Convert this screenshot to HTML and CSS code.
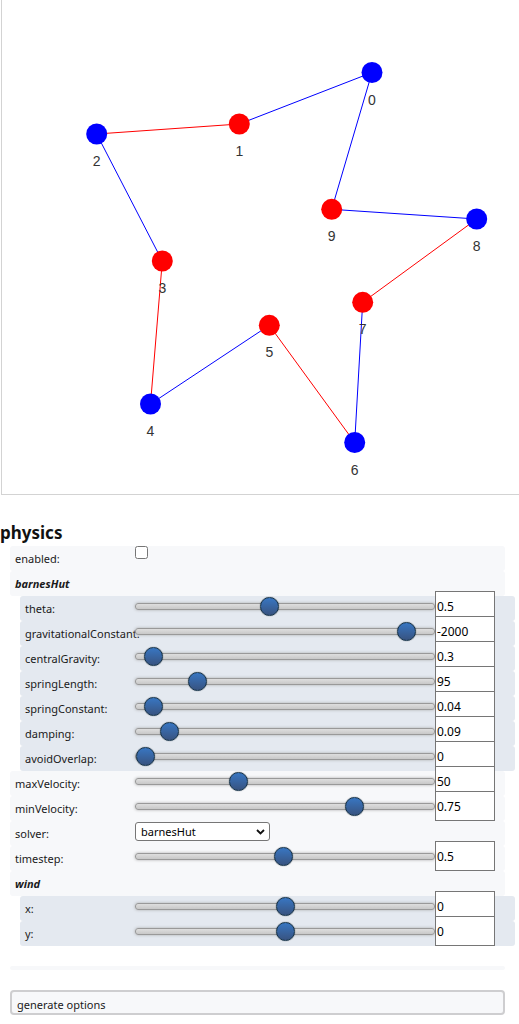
FILE: index.html
```html
<!DOCTYPE html>
<html lang="en">
<head>
    <meta charset="UTF-8">
    <meta name="viewport" content="width=device-width, initial-scale=1.0">
    <title>network physics</title>
    <link rel="stylesheet" href="styles.css">
</head>
<body>
    <div class="network">
        <svg class="graph" width="517" height="494" viewBox="2 0 517 494">
            <g class="edges" stroke-width="1">
                <line x1="372" y1="72.5" x2="239.3" y2="124" stroke="#0000ff"/>
                <line x1="239.3" y1="124" x2="96.7" y2="134" stroke="#ff0000"/>
                <line x1="96.7" y1="134" x2="162.3" y2="261" stroke="#0000ff"/>
                <line x1="162.3" y1="261" x2="150.5" y2="404" stroke="#ff0000"/>
                <line x1="150.5" y1="404" x2="269.3" y2="325.3" stroke="#0000ff"/>
                <line x1="269.3" y1="325.3" x2="354.7" y2="442.5" stroke="#ff0000"/>
                <line x1="354.7" y1="442.5" x2="362.7" y2="302.3" stroke="#0000ff"/>
                <line x1="362.7" y1="302.3" x2="476.7" y2="219" stroke="#ff0000"/>
                <line x1="476.7" y1="219" x2="331.7" y2="209.3" stroke="#0000ff"/>
                <line x1="331.7" y1="209.3" x2="372" y2="72.5" stroke="#0000ff"/>
            </g>
            <g class="nodes">
                <circle cx="372" cy="72.5" r="10.5" fill="#0000ff"/>
                <circle cx="239.3" cy="124" r="10.5" fill="#ff0000"/>
                <circle cx="96.7" cy="134" r="10.5" fill="#0000ff"/>
                <circle cx="162.3" cy="261" r="10.5" fill="#ff0000"/>
                <circle cx="150.5" cy="404" r="10.5" fill="#0000ff"/>
                <circle cx="269.3" cy="325.3" r="10.5" fill="#ff0000"/>
                <circle cx="354.7" cy="442.5" r="10.5" fill="#0000ff"/>
                <circle cx="362.7" cy="302.3" r="10.5" fill="#ff0000"/>
                <circle cx="476.7" cy="219" r="10.5" fill="#0000ff"/>
                <circle cx="331.7" cy="209.3" r="10.5" fill="#ff0000"/>
            </g>
            <g class="labels">
                <text x="372" y="104.5">0</text>
                <text x="239.3" y="156">1</text>
                <text x="96.7" y="166">2</text>
                <text x="162.3" y="293">3</text>
                <text x="150.5" y="436">4</text>
                <text x="269.3" y="357.3">5</text>
                <text x="354.7" y="474.5">6</text>
                <text x="362.7" y="334.3">7</text>
                <text x="476.7" y="251">8</text>
                <text x="331.7" y="241.3">9</text>
            </g>
        </svg>
    </div>

    <div class="config">
        <div class="config-header">physics</div>

        <div class="item s2">
            <div class="label">enabled:</div>
            <input type="checkbox" class="check">
        </div>
        <div class="item s2">
            <div class="label subhead">barnesHut</div>
        </div>

        <div class="item s3">
            <div class="label">theta:</div>
            <input type="range" class="range" min="0" max="1000" value="444">
            <input type="text" class="value" value="0.5">
        </div>
        <div class="item s3">
            <div class="label">gravitationalConstant:</div>
            <input type="range" class="range" min="0" max="1000" value="934">
            <input type="text" class="value" value="-2000">
        </div>
        <div class="item s3">
            <div class="label">centralGravity:</div>
            <input type="range" class="range" min="0" max="1000" value="27">
            <input type="text" class="value" value="0.3">
        </div>
        <div class="item s3">
            <div class="label">springLength:</div>
            <input type="range" class="range" min="0" max="1000" value="188">
            <input type="text" class="value" value="95">
        </div>
        <div class="item s3">
            <div class="label">springConstant:</div>
            <input type="range" class="range" min="0" max="1000" value="29">
            <input type="text" class="value" value="0.04">
        </div>
        <div class="item s3">
            <div class="label">damping:</div>
            <input type="range" class="range" min="0" max="1000" value="86">
            <input type="text" class="value" value="0.09">
        </div>
        <div class="item s3">
            <div class="label">avoidOverlap:</div>
            <input type="range" class="range" min="0" max="1000" value="0">
            <input type="text" class="value" value="0">
        </div>

        <div class="item s2">
            <div class="label">maxVelocity:</div>
            <input type="range" class="range" min="0" max="1000" value="333">
            <input type="text" class="value" value="50">
        </div>
        <div class="item s2">
            <div class="label">minVelocity:</div>
            <input type="range" class="range" min="0" max="1000" value="749">
            <input type="text" class="value" value="0.75">
        </div>
        <div class="item s2">
            <div class="label">solver:</div>
            <div class="select-wrap">
                <select class="select">
                    <option selected>barnesHut</option>
                    <option>forceAtlas2Based</option>
                    <option>repulsion</option>
                    <option>hierarchicalRepulsion</option>
                </select>
                <svg class="chevron" width="9" height="6" viewBox="0 0 9 6">
                    <path d="M1 1 L4.5 4.5 L8 1" fill="none" stroke="#111" stroke-width="1.8"/>
                </svg>
            </div>
        </div>
        <div class="item s2">
            <div class="label">timestep:</div>
            <input type="range" class="range" min="0" max="1000" value="494">
            <input type="text" class="value" value="0.5">
        </div>
        <div class="item s2">
            <div class="label subhead">wind</div>
        </div>

        <div class="item s3">
            <div class="label">x:</div>
            <input type="range" class="range" min="0" max="1000" value="502">
            <input type="text" class="value" value="0">
        </div>
        <div class="item s3">
            <div class="label">y:</div>
            <input type="range" class="range" min="0" max="1000" value="502">
            <input type="text" class="value" value="0">
        </div>

        <div class="option-container"></div>
        <div class="config-button">generate options</div>
    </div>
</body>
</html>
```

FILE: styles.css
```css
* {
    box-sizing: border-box;
}
body {
    margin: 0;
    font-family: "Noto Sans", "Open Sans", sans-serif;
    font-size: 11px;
    color: #1a1a1a;
    overflow-x: hidden;
}
.network {
    height: 495px;
    margin-left: 1px;
    border-left: 1px solid #d3d3d3;
    border-bottom: 1px solid #d3d3d3;
}
.graph {
    display: block;
}
.labels text {
    font-family: "Liberation Sans", Arial, sans-serif;
    font-size: 14px;
    fill: #343434;
    text-anchor: middle;
}
.config-header {
    margin-top: 25px;
    height: 26px;
    line-height: 25px;
    font-size: 17px;
    font-weight: bold;
    color: #111;
}
.item {
    position: relative;
    display: flex;
    width: 495px;
    height: 25px;
    line-height: 25px;
    padding-left: 5px;
    border-radius: 3px;
}
.item.s2 {
    margin-left: 10px;
    background-color: #f7f8fa;
}
.item.s3 {
    margin-left: 20px;
    background-color: #e4e9f0;
}
.label {
    flex-shrink: 0;
    width: 120px;
    white-space: nowrap;
}
.s3 .label {
    width: 110px;
}
.subhead {
    font-weight: bold;
    font-style: italic;
}
.check {
    align-self: flex-start;
    width: 13px;
    height: 13px;
    margin: 0;
}
.range {
    -webkit-appearance: none;
    appearance: none;
    align-self: flex-start;
    flex-shrink: 0;
    width: 300px;
    height: 20px;
    margin: 0;
    border: 0;
    background-color: transparent;
}
.range::-webkit-slider-runnable-track {
    height: 7px;
    background: linear-gradient(to bottom, #dedede 0%, #c8c8c8 99%);
    border: 1px solid #999;
    box-shadow: #aaa 0 0 3px 0;
    border-radius: 3px;
}
.range::-webkit-slider-thumb {
    -webkit-appearance: none;
    width: 19px;
    height: 19px;
    margin-top: -7px;
    border: 1px solid #14334b;
    border-radius: 50%;
    background: linear-gradient(to bottom, #3876c2 0%, #385380 100%);
    box-shadow: #111927 0 0 1px 0;
}
.value {
    align-self: flex-start;
    flex-shrink: 0;
    width: 60px;
    height: 30px;
    margin: -5px 0 0 0;
    padding: 1px;
    border: 1px solid #767676;
    border-radius: 0;
    background: #fff;
    font-family: "Noto Sans", "Open Sans", sans-serif;
    font-size: 12px;
    color: #000;
}
.select-wrap {
    position: relative;
    align-self: flex-start;
    margin-top: 1px;
}
.select {
    -webkit-appearance: none;
    appearance: none;
    display: block;
    width: 135px;
    height: 19px;
    margin: 0;
    padding: 0 0 0 5px;
    border: 1px solid #767676;
    border-radius: 3px;
    background: #fff;
    font-family: "Noto Sans", "Open Sans", sans-serif;
    font-size: 11px;
    color: #000;
}
.chevron {
    position: absolute;
    right: 5px;
    top: 7px;
}
.option-container {
    width: 495px;
    height: 4px;
    margin: 20px 0 0 10px;
    border: 2px solid #f7f8fa;
    border-radius: 4px;
}
.config-button {
    width: 495px;
    height: 25px;
    margin: 20px 0 30px 10px;
    padding-left: 5px;
    line-height: 25px;
    background-color: #f7f8fa;
    border: 2px solid #ceced0;
    border-radius: 4px;
    cursor: pointer;
}
```
